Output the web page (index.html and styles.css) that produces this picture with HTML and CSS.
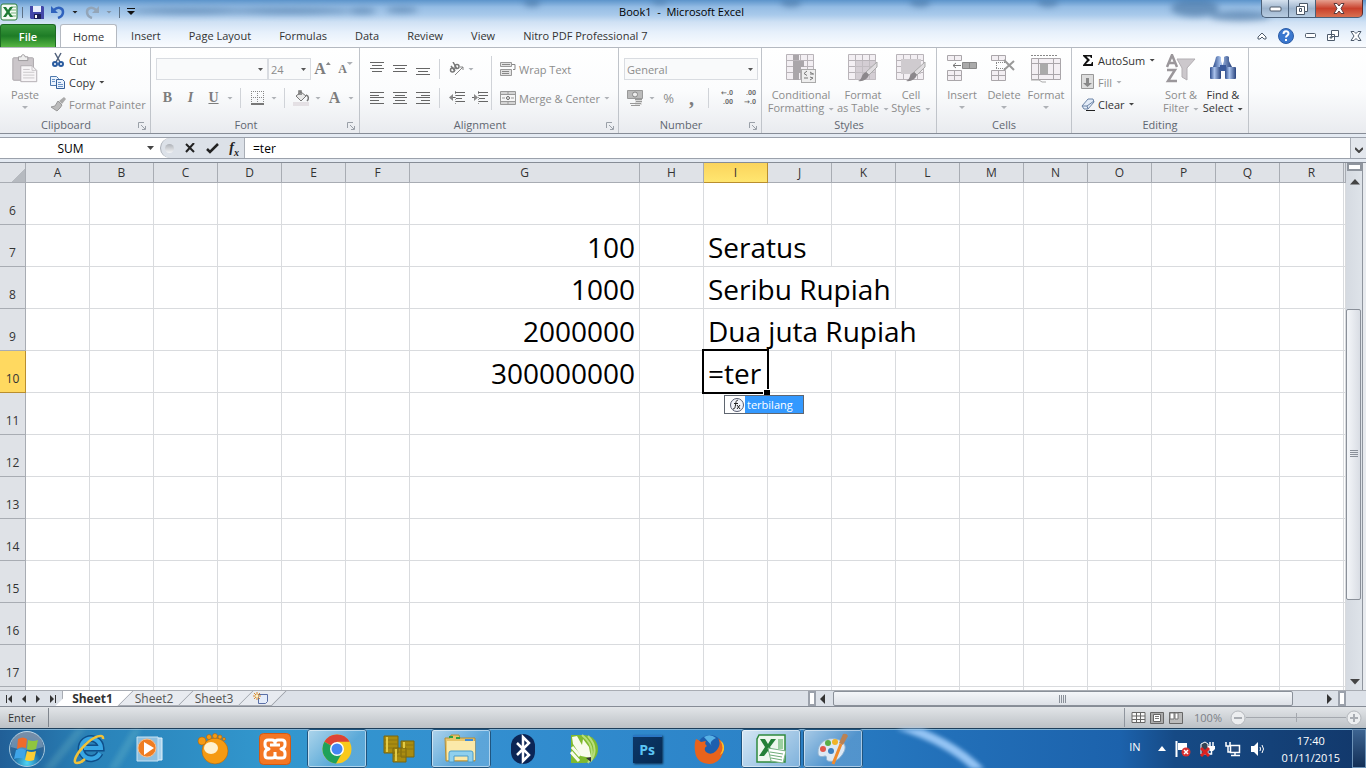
FILE: index.html
```html
<!DOCTYPE html>
<html lang="en">

<head>
  <meta charset="UTF-8">
  <meta name="viewport" content="width=device-width, initial-scale=1.0">
  <title>Book1 - Microsoft Excel</title>
  <link rel="stylesheet" href="styles.css">
</head>

<body>
  <header class="top">
    <svg class="glass" width="100%" height="24" aria-hidden="true">
      <g fill="#3d6a9a" opacity="0.55">
        <ellipse cx="190" cy="11" rx="60" ry="3" />
        <ellipse cx="290" cy="11" rx="62" ry="3" />
        <ellipse cx="362" cy="11" rx="14" ry="3" />
        <ellipse cx="402" cy="10" rx="16" ry="3" />
        <ellipse cx="532" cy="2" rx="8" ry="5" />
        <ellipse cx="660" cy="0" rx="8" ry="5" />
        <ellipse cx="791" cy="2" rx="10" ry="5" />
        <ellipse cx="920" cy="2" rx="10" ry="5" />
        <ellipse cx="1048" cy="2" rx="10" ry="5" />
        <ellipse cx="1195" cy="8" rx="24" ry="9" />
        <ellipse cx="1240" cy="16" rx="30" ry="5" />
      </g>
    </svg>
    <div class="titlebar">
      <div class="quick">
        <svg width="18" height="18" viewBox="0 0 18 18"><rect x="1" y="1" width="16" height="16" rx="2" fill="#f4faf4" stroke="#2c7d3a"/><path d="M11 4h5M11 7h5M11 10h5M11 13h5" stroke="#73b37a"/><path d="M3 4h3l2 3 2-3h3L9.500 9l3.500 5h-3L8 11l-2 3H3l3.500-5z" fill="#1f7a34"/></svg>
        <i class="qsep"></i>
        <button class="qb" aria-label="Save"><svg width="14" height="14" viewBox="0 0 14 14"><path d="M0 1h13l1 1v12H1l-1-1z" fill="#4247a8"/><path d="M3 1h8v6H3z" fill="#e9eefb"/><path d="M4 9h7v5H4z" fill="#1c2055"/><path d="M5 10h2v3H5z" fill="#fff"/></svg></button>
        <button class="qb" aria-label="Undo"><svg width="14" height="14" viewBox="0 0 14 14"><path d="M3 5c4-4 9-2 9 2 0 3-2 5-5 6" fill="none" stroke="#2f62bd" stroke-width="2.500"/><path d="M0 1v7h7z" fill="#2f62bd"/></svg></button>
        <i class="arrow dark"></i>
        <button class="qb" aria-label="Redo"><svg width="14" height="14" viewBox="0 0 14 14"><path d="M11 5C7 1 2 3 2 7c0 3 2 5 5 6" fill="none" stroke="#93a5b8" stroke-width="2.500"/><path d="M14 1v7H7z" fill="#93a5b8"/></svg></button>
        <i class="arrow"></i>
        <i class="qsep"></i>
        <svg width="8" height="8" viewBox="0 0 8 8"><path d="M0 0h8v1H0zM0 3h8L4 7z" fill="#111"/></svg>
      </div>
      <h1>Book1&nbsp; -&nbsp; Microsoft Excel</h1>
      <div class="winbtns">
        <button aria-label="Minimize"><svg width="13" height="6"><rect x="1" y="1" width="11" height="4" rx="1" fill="#fff" stroke="#4a5766"/></svg></button>
        <button aria-label="Restore"><svg width="12" height="12" viewBox="0 0 12 12"><path d="M3.500.5h8v8h-3v3h-8v-8h3z" fill="#fff" stroke="#4a5766"/><path d="M3.500 5.500h2v3h-2zM3.500 3.500h5v5" fill="none" stroke="#4a5766"/></svg></button>
        <button class="close" aria-label="Close"><svg width="12" height="11" viewBox="0 0 12 11"><path d="M1 .5h3l2 2.500 2-2.500h3L8 5.500l3 5H8L6 8l-2 2.500H1l3-5z" fill="#fff" stroke="#5a3a3c"/></svg></button>
      </div>
    </div>
    <nav class="tabs">
      <button class="file">File</button>
      <button class="tab active">Home</button>
      <button class="tab">Insert</button>
      <button class="tab">Page Layout</button>
      <button class="tab">Formulas</button>
      <button class="tab">Data</button>
      <button class="tab">Review</button>
      <button class="tab">View</button>
      <button class="tab">Nitro PDF Professional 7</button>
      <div class="tabs-right">
        <button aria-label="Collapse ribbon"><svg width="10" height="8" viewBox="0 0 10 8"><path d="M1 5l4-4 4 4v2H7L5 5 3 7H1z" fill="#fff" stroke="#4d5a6b"/></svg></button>
        <button aria-label="Help"><svg width="16" height="16" viewBox="0 0 16 16"><circle cx="8" cy="8" r="7.500" fill="#3b78cf" stroke="#2c5ca6"/><path d="M5.500 6c0-3.500 5-3.500 5-.5 0 2-2.500 2-2.500 4M8 11v2" fill="none" stroke="#fff" stroke-width="2"/></svg></button>
        <button aria-label="Minimize workbook"><svg width="11" height="5"><rect x=".5" y=".5" width="10" height="4" rx="1" fill="#fff" stroke="#4d5a6b"/></svg></button>
        <button aria-label="Restore workbook"><svg width="12" height="11" viewBox="0 0 12 11"><path d="M4.500.5h7v6h-7zM.5 4.500h7v6h-7z" fill="#fff" stroke="#4d5a6b"/><path d="M3 7h2v1H3z" fill="#fff" stroke="#4d5a6b"/></svg></button>
        <button aria-label="Close workbook"><svg width="12" height="10" viewBox="0 0 12 10"><path d="M1 .5h3l2 2 2-2h3L8 5l3 4.500H8l-2-2-2 2H1L4 5z" fill="#fff" stroke="#4d5a6b"/></svg></button>
      </div>
    </nav>
  </header>

  <section class="ribbon">
    <div class="group g-clipboard">
      <div class="group-body">
        <button class="big paste" disabled>
          <svg width="28" height="32" viewBox="0 0 28 32"><rect x="1" y="4" width="22" height="24" rx="1" fill="#cbc6ca" stroke="#aaa5aa"/><path d="M7 3h3c0-3 4-3 4 0h3v4H7z" fill="#eee" stroke="#9a969a"/><path d="M9.500 12.500h12l5 5v12h-17z" fill="#f7f5f7" stroke="#b0acb0"/><path d="M21.500 12.500v5h5M12 16.500h7M12 19.500h12M12 22.500h12M12 25.500h12" fill="none" stroke="#c9c5c9"/></svg>
          <span>Paste</span><i class="arrow"></i>
        </button>
        <div class="list">
          <button class="row"><svg width="16" height="16" viewBox="0 0 16 16"><path d="M5 1l5 9M11 1L6 10" stroke="#52627c" stroke-width="1.500"/><circle cx="5" cy="12" r="2" fill="none" stroke="#2b5c9f" stroke-width="2"/><circle cx="11" cy="12" r="2" fill="none" stroke="#2b5c9f" stroke-width="2"/></svg>Cut</button>
          <button class="row"><svg width="16" height="16" viewBox="0 0 16 16"><path d="M.5 2.500h6l2 2v7h-8z" fill="#eaf2fc" stroke="#4e79ae"/><path d="M6.500 5.500h6l2 2v7h-8z" fill="#eaf2fc" stroke="#35609a"/><path d="M2 5.500h3M2 7.500h3M8 8.500h3M8 10.500h5M8 12.500h5" stroke="#6b93c6"/></svg>Copy<i class="arrow dark"></i></button>
          <button class="row" disabled><svg width="16" height="16" viewBox="0 0 16 16"><path d="M14 1l2 2-4 5-3-3z" fill="#aaa"/><path d="M8 5l4 4-2 3-3 3-6-4 4-1z" fill="#bbb" stroke="#999"/></svg>Format Painter</button>
        </div>
      </div>
      <div class="group-label with-launch">Clipboard<svg class="launch" width="8" height="8"><use href="#launch"/></svg></div>
    </div>

    <div class="group g-font">
      <div class="group-body tools">
        <div class="line">
          <div class="combo font-name"><select aria-label="Font" disabled><option></option></select></div>
          <div class="combo font-size"><select aria-label="Font size" disabled><option>24</option></select></div>
          <button class="ib serif grow" disabled>A<i class="up"></i></button>
          <button class="ib serif shrink" disabled>A<i class="arrow"></i></button>
        </div>
        <div class="line">
          <button class="ib serif" disabled>B</button>
          <button class="ib serif italic" disabled>I</button>
          <button class="ib serif under" disabled>U</button><i class="arrow cell"></i>
          <i class="vsep"></i>
          <button class="ib" aria-label="Borders" disabled><svg width="14" height="14" viewBox="0 0 14 14"><path d="M.5 0v13M6.500 0v13M12.500 0v13M0 .5h13M0 6.500h13" stroke="#888" stroke-dasharray="1 1"/><path d="M0 13h13" stroke="#777" stroke-width="2"/></svg></button><i class="arrow cell"></i>
          <i class="vsep"></i>
          <button class="ib" aria-label="Fill color" disabled><svg width="17" height="16" viewBox="0 0 17 16"><path d="M3 6l5-4 5 4-5 5z" fill="#e9e9e9" stroke="#777"/><path d="M6 5V1h2v4M13 5c3 1 3 4 1 6" fill="none" stroke="#777" stroke-width="1.500"/><path d="M0 12h16v4H0z" fill="#e4e0e4"/></svg></button><i class="arrow cell"></i>
          <button class="ib serif fontcolor" disabled>A</button><i class="arrow cell"></i>
        </div>
      </div>
      <div class="group-label with-launch">Font<svg class="launch" width="8" height="8"><use href="#launch"/></svg></div>
    </div>

    <div class="group g-align">
      <div class="group-body">
        <div class="tools align-left">
          <div class="line">
            <button class="ib" aria-label="Top align" disabled><svg width="14" height="14"><path d="M0 .5h14M2 3.500h10M0 6.500h14M2 9.500h10" class="st"/></svg></button>
            <button class="ib" aria-label="Middle align" disabled><svg width="14" height="14"><path d="M0 3.500h14M2 6.500h10M0 9.500h14" class="st"/></svg></button>
            <button class="ib" aria-label="Bottom align" disabled><svg width="14" height="14"><path d="M0 6.500h14M2 9.500h10M0 12.500h14" class="st"/></svg></button>
            <i class="vsep"></i>
            <button class="ib" aria-label="Orientation" disabled><svg width="16" height="14" viewBox="0 0 16 14"><circle cx="3.500" cy="8" r="2" fill="none" stroke="#777" stroke-width="1.500"/><path d="M2 4l4 5M4 0l4 7" stroke="#777" stroke-width="1.500"/><circle cx="8" cy="4.500" r="2" fill="none" stroke="#777" stroke-width="1.500"/><path d="M6 13l8-8M11 5h3v3" fill="none" stroke="#888"/></svg></button><i class="arrow"></i>
          </div>
          <div class="line">
            <button class="ib" aria-label="Align left" disabled><svg width="14" height="12"><path d="M0 .5h14M0 3.500h9M0 5.500h14M0 8.500h9M0 11.500h14" class="st"/></svg></button>
            <button class="ib" aria-label="Center" disabled><svg width="14" height="12"><path d="M0 .5h14M2 3.500h10M0 5.500h14M2 8.500h10M0 11.500h14" class="st"/></svg></button>
            <button class="ib" aria-label="Align right" disabled><svg width="14" height="12"><path d="M0 .5h14M5 3.500h9M0 5.500h14M5 8.500h9M0 11.500h14" class="st"/></svg></button>
            <i class="vsep"></i>
            <button class="ib" aria-label="Decrease indent" disabled><svg width="16" height="14"><path d="M1 6.500h5M6 1.500h10M7 4.500h9M7 7.500h6M6 10.500h10" class="st"/><path d="M4 3v7L0 6.500z" fill="#888"/><path d="M6.500 0v14" stroke="#999" stroke-dasharray="1 1"/></svg></button>
            <button class="ib" aria-label="Increase indent" disabled><svg width="16" height="14"><path d="M0 6.500h5M6 1.500h10M7 4.500h9M7 7.500h6M6 10.500h10" class="st"/><path d="M2 3v7l4-3.500z" fill="#888"/><path d="M6.500 0v14" stroke="#999" stroke-dasharray="1 1"/></svg></button>
          </div>
        </div>
        <div class="tools align-right">
          <div class="line"><button class="row" disabled><svg width="16" height="16" viewBox="0 0 16 16"><path d="M.5 1.500h11v4H.5zM.5 8.500h11v6H.5z" fill="#e2e2e2" stroke="#999"/><path d="M2 3.500h8M2 10.500h7M2 12.500h7M12 3.500h3v5h-2" fill="none" stroke="#888"/></svg>Wrap Text</button></div>
          <div class="line"><button class="row" disabled><svg width="16" height="16" viewBox="0 0 16 16"><path d="M.5 1.500h15v13H.5z" fill="#d4d4d4" stroke="#999"/><path d="M1 5h14v6H1z" fill="#f6f6f6"/><path d="M0 4.500h16M0 11.500h16M8 1v3M8 12v3M2 8h3M11 8h3" stroke="#999"/><circle cx="8" cy="8" r="1.500" fill="none" stroke="#666"/></svg>Merge &amp; Center<i class="arrow"></i></button></div>
        </div>
      </div>
      <div class="group-label with-launch">Alignment<svg class="launch" width="8" height="8"><use href="#launch"/></svg></div>
    </div>

    <div class="group g-number">
      <div class="group-body tools">
        <div class="line">
          <div class="combo number-format"><select aria-label="Number format" disabled><option>General</option></select></div>
        </div>
        <div class="line">
          <button class="ib" aria-label="Accounting format" disabled><svg width="17" height="16" viewBox="0 0 17 16"><path d="M.5.5h15v8H.5z" fill="#bbb" stroke="#999"/><circle cx="8" cy="4.500" r="2.500" fill="#eee" stroke="#888"/><path d="M8 9h7v6H8z" fill="#ddd"/><path d="M8 9.500h7M9 11.500h6M3 13.500h11M4 15.500h9" stroke="#999"/></svg></button><i class="arrow cell"></i>
          <button class="ib pct" disabled>%</button>
          <button class="ib serif comma" disabled>,</button>
          <i class="vsep"></i>
          <button class="ib dec" aria-label="Increase decimal" disabled><span>←.0</span><span>.00</span></button>
          <button class="ib dec" aria-label="Decrease decimal" disabled><span>.00</span><span>→.0</span></button>
        </div>
      </div>
      <div class="group-label with-launch">Number<svg class="launch" width="8" height="8"><use href="#launch"/></svg></div>
    </div>

    <div class="group g-styles">
      <div class="group-body">
        <button class="big cond" disabled>
          <svg width="30" height="30" viewBox="0 0 30 30"><use href="#grid"/><path d="M7 1h6v5H7zM7 7h11v6H7zM7 13h8v6H7zM7 19h6v7H7z" fill="#aaa6aa"/><rect x="15.500" y="15.500" width="14" height="13" fill="#eee" stroke="#aaa"/><path d="M21 17l-3 2.500 3 2M18 24h4M24 18l3 2M24 20h4M24 23l3 1-3 2" fill="none" stroke="#777"/></svg>
          <span>Conditional<br>Formatting<i class="arrow"></i></span>
        </button>
        <button class="big astable" disabled>
          <svg width="30" height="30" viewBox="0 0 30 30"><use href="#grid"/><path d="M7 7h21v19H7z" fill="#c6c1c6" opacity=".7"/><use href="#brush"/></svg>
          <span>Format<br>as Table<i class="arrow"></i></span>
        </button>
        <button class="big cellst" disabled>
          <svg width="30" height="30" viewBox="0 0 30 30"><use href="#grid"/><path d="M5 5h20v15H5z" fill="#cfcbcf"/><use href="#brush"/></svg>
          <span>Cell<br>Styles<i class="arrow"></i></span>
        </button>
      </div>
      <div class="group-label">Styles</div>
    </div>

    <div class="group g-cells">
      <div class="group-body">
        <button class="big" disabled>
          <svg width="30" height="30" viewBox="0 0 30 30"><path d="M.5 1.500h14v5H.5zM7.500 1.500v5M.5 16.500h14v10H.5zM7.500 16.500v10M.5 21.500h14" fill="#f3eff3" stroke="#aaa6aa"/><path d="M15.500 8.500h14v6h-14zM22.500 8.500v6" fill="#aaa" stroke="#888"/><path d="M6 11.500h8M9 9l-3 2.500L9 14" fill="none" stroke="#777"/></svg>
          <span>Insert</span><i class="arrow"></i>
        </button>
        <button class="big" disabled>
          <svg width="30" height="30" viewBox="0 0 30 30"><path d="M2.500 1.500h14v5h-14zM9.500 1.500v5M2.500 16.500h14v10h-14zM9.500 16.500v10M2.500 21.500h14" fill="#f3eff3" stroke="#aaa6aa"/><path d="M7 8.500h10M7.500 9v6M7 14.500h10" stroke="#888" stroke-dasharray="1 1"/><path d="M15 6l10 10M25 7L15 16" stroke="#999" stroke-width="2"/></svg>
          <span>Delete</span><i class="arrow"></i>
        </button>
        <button class="big" disabled>
          <svg width="32" height="30" viewBox="0 0 32 30"><path d="M1.500 4.500h29v21h-29zM1.500 9.500h29M1.500 20.500h29M8.500 4.500v21M23.500 4.500v21" fill="#f3eff3" stroke="#aaa6aa"/><path d="M10 10h8v10h-8z" fill="#aaa"/><path d="M1 1.500h26" stroke="#888" stroke-dasharray="2 1"/><path d="M1 26h8l3 2h4" fill="none" stroke="#aaa"/></svg>
          <span>Format</span><i class="arrow"></i>
        </button>
      </div>
      <div class="group-label">Cells</div>
    </div>

    <div class="group g-editing">
      <div class="group-body">
        <div class="list">
          <button class="row"><svg width="14" height="14" viewBox="0 0 14 14"><path d="M2 2h9v3h-1L9 3.500H5.500L9 7l-4 4h5l1-2h1v4H2v-1l4-5-4-4z" fill="#111"/></svg>AutoSum<i class="arrow dark"></i></button>
          <button class="row" disabled><svg width="14" height="16" viewBox="0 0 14 16"><path d="M.5.5h12v14H.5z" fill="#ddd" stroke="#999"/><path d="M5 4h3v5h3l-4.500 4L2 9h3z" fill="#888"/></svg>Fill<i class="arrow"></i></button>
          <button class="row"><svg width="14" height="14" viewBox="0 0 14 14"><path d="M1 9l6-7h5l1 3-6 7H3z" fill="#e3ecf8" stroke="#6b83a6"/><path d="M1 9h5l7-5M6 9l1 3" fill="none" stroke="#6b83a6"/><path d="M5 13.500h9" stroke="#222"/></svg>Clear<i class="arrow dark"></i></button>
        </div>
        <button class="big" disabled>
          <svg width="32" height="30" viewBox="0 0 32 30"><path d="M2 13L7 1l5 12M4 9h6" fill="none" stroke="#9b979b" stroke-width="2.500"/><path d="M2 16h8L3 27h9" fill="none" stroke="#9b979b" stroke-width="2.500"/><path d="M12 5h18l-8 9v12l-5-3v-9z" fill="#ccc8cc" stroke="#b3afb3"/></svg>
          <span>Sort &amp;<br>Filter<i class="arrow"></i></span>
        </button>
        <button class="big">
          <svg width="30" height="30" viewBox="0 0 30 30"><defs><linearGradient id="bino"><stop offset="0" stop-color="#2c4c8c"/><stop offset=".4" stop-color="#a9c2ec"/><stop offset="1" stop-color="#27427c"/></linearGradient></defs><path d="M8 3q2-2 5 0v4l2 6H5l2-6zM16 3q3-2 5 0v4l3 6H14l2-6z" fill="url(#bino)"/><rect x="2" y="13" width="11" height="12" rx="1" fill="url(#bino)"/><rect x="17" y="13" width="11" height="12" rx="1" fill="url(#bino)"/><path d="M12 11h6v6h-6z" fill="#3a5a9c"/></svg>
          <span>Find &amp;<br>Select<i class="arrow dark"></i></span>
        </button>
      </div>
      <div class="group-label">Editing</div>
    </div>
  </section>

  <div class="formula-bar">
    <div class="namebox"><input type="text" value="SUM" aria-label="Name box"><i class="arrow dark"></i></div>
    <div class="fx-buttons">
      <i class="knob"></i>
      <button aria-label="Cancel"><svg width="10" height="10" viewBox="0 0 10 10"><path d="M1 1l8 8M9 0L1 9" stroke="#222" stroke-width="2"/></svg></button>
      <button aria-label="Enter"><svg width="13" height="11" viewBox="0 0 13 11"><path d="M1 6l3 3 8-8" fill="none" stroke="#222" stroke-width="2.500"/></svg></button>
      <button class="fx" aria-label="Insert function">f<sub>x</sub></button>
    </div>
    <input class="formula" type="text" value="=ter" aria-label="Formula">
    <button class="expand" aria-label="Expand formula bar"><svg width="8" height="6"><path d="M0 1l4 4 4-4" fill="none" stroke="#444" stroke-width="2"/></svg></button>
  </div>

  <main class="workspace">
    <div class="sheet">
      <table>
        <colgroup>
          <col class="c-head"><col span="6" class="c"><col class="c-wide"><col span="11" class="c"><col>
        </colgroup>
        <thead>
          <tr><th class="corner"></th><th>A</th><th>B</th><th>C</th><th>D</th><th>E</th><th>F</th><th>G</th><th>H</th><th class="sel">I</th><th>J</th><th>K</th><th>L</th><th>M</th><th>N</th><th>O</th><th>P</th><th>Q</th><th>R</th><th></th></tr>
        </thead>
        <tbody>
          <tr><th>6</th><td></td><td></td><td></td><td></td><td></td><td></td><td></td><td></td><td></td><td></td><td></td><td></td><td></td><td></td><td></td><td></td><td></td><td></td><td></td></tr>
          <tr><th>7</th><td></td><td></td><td></td><td></td><td></td><td></td><td class="num">100</td><td></td><td colspan="2">Seratus</td><td></td><td></td><td></td><td></td><td></td><td></td><td></td><td></td><td></td></tr>
          <tr><th>8</th><td></td><td></td><td></td><td></td><td></td><td></td><td class="num">1000</td><td></td><td colspan="3">Seribu Rupiah</td><td></td><td></td><td></td><td></td><td></td><td></td><td></td><td></td></tr>
          <tr><th>9</th><td></td><td></td><td></td><td></td><td></td><td></td><td class="num">2000000</td><td></td><td colspan="4">Dua juta Rupiah</td><td></td><td></td><td></td><td></td><td></td><td></td><td></td></tr>
          <tr><th class="sel">10</th><td></td><td></td><td></td><td></td><td></td><td></td><td class="num">300000000</td><td></td><td class="editing">=ter
            <div class="suggest"><svg width="20" height="16" viewBox="0 0 20 16"><circle cx="12" cy="8" r="6.500" fill="#f2f4fa" stroke="#555b70"/><path d="M13 3.500c-2-1-2 2-2.500 4.500S10 12 8 12M9 6.500h4M12 8l3 4M15 8l-3 4" fill="none" stroke="#222"/></svg><span>terbilang</span></div>
          </td><td></td><td></td><td></td><td></td><td></td><td></td><td></td><td></td><td></td><td></td></tr>
          <tr><th>11</th><td></td><td></td><td></td><td></td><td></td><td></td><td></td><td></td><td></td><td></td><td></td><td></td><td></td><td></td><td></td><td></td><td></td><td></td><td></td></tr>
          <tr><th>12</th><td></td><td></td><td></td><td></td><td></td><td></td><td></td><td></td><td></td><td></td><td></td><td></td><td></td><td></td><td></td><td></td><td></td><td></td><td></td></tr>
          <tr><th>13</th><td></td><td></td><td></td><td></td><td></td><td></td><td></td><td></td><td></td><td></td><td></td><td></td><td></td><td></td><td></td><td></td><td></td><td></td><td></td></tr>
          <tr><th>14</th><td></td><td></td><td></td><td></td><td></td><td></td><td></td><td></td><td></td><td></td><td></td><td></td><td></td><td></td><td></td><td></td><td></td><td></td><td></td></tr>
          <tr><th>15</th><td></td><td></td><td></td><td></td><td></td><td></td><td></td><td></td><td></td><td></td><td></td><td></td><td></td><td></td><td></td><td></td><td></td><td></td><td></td></tr>
          <tr><th>16</th><td></td><td></td><td></td><td></td><td></td><td></td><td></td><td></td><td></td><td></td><td></td><td></td><td></td><td></td><td></td><td></td><td></td><td></td><td></td></tr>
          <tr><th>17</th><td></td><td></td><td></td><td></td><td></td><td></td><td></td><td></td><td></td><td></td><td></td><td></td><td></td><td></td><td></td><td></td><td></td><td></td><td></td></tr>
          <tr><th></th><td></td><td></td><td></td><td></td><td></td><td></td><td></td><td></td><td></td><td></td><td></td><td></td><td></td><td></td><td></td><td></td><td></td><td></td><td></td></tr>
        </tbody>
      </table>
    </div>
    <div class="vscroll">
      <i class="split"></i>
      <svg width="10" height="6"><path d="M0 5.500h10L5 0z" fill="#444"/></svg>
      <div class="vtrack">
        <i class="before"></i>
        <div class="vthumb"><svg width="8" height="8"><path d="M0 .5h8M0 2.500h8M0 4.500h8M0 6.500h8" stroke="#8a9099"/></svg></div>
        <i class="after"></i>
      </div>
      <svg width="10" height="6"><path d="M0 0h10L5 5.500z" fill="#444"/></svg>
    </div>
  </main>

  <div class="sheetbar">
    <div class="nav">
      <button aria-label="First sheet"><svg width="8" height="8"><path d="M1.500 0v8" stroke="#333"/><path d="M7 0v8L3 4z" fill="#333"/></svg></button>
      <button aria-label="Previous sheet"><svg width="6" height="8"><path d="M5 0v8L1 4z" fill="#333"/></svg></button>
      <button aria-label="Next sheet"><svg width="6" height="8"><path d="M1 0v8l4-4z" fill="#333"/></svg></button>
      <button aria-label="Last sheet"><svg width="8" height="8"><path d="M6.500 0v8" stroke="#333"/><path d="M1 0v8l4-4z" fill="#333"/></svg></button>
    </div>
    <div class="sheets">
      <button class="sheet-tab current">Sheet1</button>
      <button class="sheet-tab">Sheet2</button>
      <button class="sheet-tab">Sheet3</button>
      <button class="sheet-tab new" aria-label="Insert worksheet"><svg width="16" height="13" viewBox="0 0 16 13"><path d="M5.500 2.500h9v7l-2 2h-7z" fill="#e4ecfa" stroke="#5a6fa6"/><path d="M4 0v8M0 4h8M1 1l6 6M7 1L1 7" stroke="#d98a2b"/><circle cx="4" cy="4" r="1.500" fill="#fff3c0"/></svg></button>
    </div>
    <div class="hscroll">
      <i class="split"></i>
      <svg width="17" height="10"><path d="M9 0v10L4 5z" fill="#333"/></svg>
      <div class="hthumb"><svg width="8" height="8"><path d="M.5 0v8M2.500 0v8M4.500 0v8M6.500 0v8" stroke="#8a9099"/></svg></div>
      <svg class="right" width="17" height="10"><path d="M6 0v10l5-5z" fill="#333"/></svg>
      <i class="split"></i>
    </div>
  </div>

  <footer class="status">
    <span class="mode">Enter</span>
    <div class="view">
      <button aria-label="Normal"><svg width="15" height="12"><path d="M1 .5h13v10H1zM1 4h13M1 7.500h13M5.500 1v9M9.500 1v9" fill="#f8f8f8" stroke="#666"/></svg></button>
      <button aria-label="Page layout"><svg width="15" height="12"><path d="M.5.5h13v11H.5z" fill="#aaa" stroke="#666"/><path d="M3.500 2.500h7v7h-7z" fill="#fff" stroke="#666"/><path d="M5 4.500h4M5 6.500h4" stroke="#777"/></svg></button>
      <button aria-label="Page break preview"><svg width="15" height="12"><path d="M.5.5h13v11H.5z" fill="#bbb" stroke="#666"/><path d="M1 1h4v6H1zM6 1h3v6H6z" fill="#fff" stroke="#777"/></svg></button>
      <span class="zoom">100%</span>
      <button aria-label="Zoom out"><svg width="16" height="16"><circle cx="8" cy="8" r="7" fill="#eceef0" stroke="#b4b8bd"/><path d="M4 8h8" stroke="#a9adb3" stroke-width="2"/></svg></button>
      <div class="slider"><i></i></div>
      <button aria-label="Zoom in"><svg width="16" height="16"><circle cx="8" cy="8" r="7" fill="#eceef0" stroke="#b4b8bd"/><path d="M4 8h8M8 4v8" stroke="#a9adb3" stroke-width="2"/></svg></button>
    </div>
  </footer>

  <div class="taskbar">
    <svg class="streaks" width="100%" height="40" aria-hidden="true">
      <path d="M40 50L85-5M110 45l30-50" stroke="#b7efd4" stroke-width="8" opacity=".15"/>
      <path d="M898-4C930 6 960 20 984 46" fill="none" stroke="#a9d3ff" stroke-width="9" opacity=".85"/>
    </svg>
    <button class="start" aria-label="Start"><svg width="38" height="38" viewBox="0 0 38 38"><defs><radialGradient id="orb" cx=".5" cy=".9" r=".8"><stop offset="0" stop-color="#4fd6f5"/><stop offset=".5" stop-color="#1a66a0"/><stop offset="1" stop-color="#48688c"/></radialGradient></defs><circle cx="19" cy="19" r="17.500" fill="url(#orb)" stroke="#a5c8de"/><path d="M3 17a16 16 0 0 1 32 0q-16 6-32 0z" fill="#fff" opacity=".25"/><path d="M10 9q5-3 9 0l-1 9q-5-2-9 1z" fill="#ee6b2b"/><path d="M20 10q5 2 10 0l-2 9q-5 2-9 0z" fill="#8fc63f"/><path d="M8 20q5-3 10 0l-2 9q-5-2-10 0z" fill="#3fa5e8"/><path d="M19 21q4 2 9 0l-2 9q-5 2-9 0z" fill="#fbcd35"/></svg></button>
    <button class="app" aria-label="Internet Explorer"><svg width="34" height="32" viewBox="0 0 34 32"><path d="M28 20a10 10 0 1 1 1-5H12" fill="none" stroke="#0f4f8a" stroke-width="7"/><path d="M28 20a10 10 0 1 1 1-5H12" fill="none" stroke="#38a6e4" stroke-width="4"/><path d="M31 6c1-6-9-3-18 6S0 30 5 30c3 0 6-2 8-4" fill="none" stroke="#f0c23a" stroke-width="2.500"/></svg></button>
    <button class="app" aria-label="Media Player"><svg width="30" height="26" viewBox="0 0 30 26"><path d="M18 2h8v22h-8z" fill="#a9d2ec" stroke="#e5f3fb"/><path d="M1 1h21v24H1z" fill="#8dc0e0" stroke="#c9e3f3"/><circle cx="11" cy="12" r="9" fill="#ef7d22" stroke="#f9bd8b"/><path d="M8 6l10 6-10 7z" fill="#fff"/></svg></button>
    <button class="app" aria-label="GOM Player"><svg width="34" height="32" viewBox="0 0 34 32"><g fill="#f59a12" stroke="#a65a06" stroke-width=".5"><circle cx="19" cy="18" r="13"/><circle cx="6" cy="8" r="4"/><circle cx="13" cy="4" r="2.500"/><circle cx="19" cy="3" r="2.500"/><circle cx="24" cy="4" r="2"/><circle cx="28" cy="6" r="1.500"/></g><ellipse cx="15" cy="15" rx="7" ry="6" fill="#fff1cf"/></svg></button>
    <button class="app" aria-label="XAMPP"><svg width="32" height="32" viewBox="0 0 32 32"><rect x=".5" y=".5" width="31" height="31" rx="4" fill="#f37623" stroke="#d45a12"/><path d="M16 13V10q0-3-3-3H9q-3 0-3 3v2q0 3 4 4-4 1-4 4v2q0 3 3 3h4q3 0 3-3v-3M16 13V10q0-3 3-3h4q3 0 3 3v2q0 3-4 4 4 1 4 4v2q0 3-3 3h-4q-3 0-3-3M11 12v0h10M11 20h0M21 20h0" fill="none" stroke="#fff" stroke-width="3" stroke-linejoin="round"/></svg></button>
    <button class="app open" aria-label="Chrome"><svg width="30" height="30" viewBox="0 0 30 30"><circle cx="15" cy="15" r="14.500" fill="#f9c91d"/><path d="M15 15L2.400 7.800A14.500 14.500 0 0 1 27.600 7.800H15z" fill="#dd4336"/><path d="M15 15L2.400 7.800A14.500 14.500 0 0 0 14 29.500L20 19z" fill="#1fa15a"/><circle cx="15" cy="15" r="7" fill="#fff"/><circle cx="15" cy="15" r="5.500" fill="#4486f4"/></svg></button>
    <button class="app" aria-label="Database"><svg width="32" height="28" viewBox="0 0 32 28"><g fill="#a98c10" stroke="#7b670c"><path d="M1 1h14v17H1zM18 6h13v16H18zM10 13h13v14H10z"/></g><path d="M1 5h14M1 9h14M1 13h9M23 10h8M23 14h8M10 17h13M10 21h13" stroke="#8d7610"/><path d="M4 2v15M21 7v6M13 14v12" stroke="#e3cb46" stroke-width="2"/></svg></button>
    <button class="app open" aria-label="Explorer"><svg width="34" height="30" viewBox="0 0 34 30"><path d="M1 4h5l1-3h8l1 3h15v23H2z" fill="#eac66a" stroke="#b28e3b"/><path d="M3 7h28v19H3z" fill="#fbe9a9"/><path d="M5 2h4v2H5zM12 3h4v2h-4z" fill="#2da044"/><path d="M21 5h8v2h-8z" fill="#3d8ad8"/><path d="M5 28v-9q0-2 2-2h20q2 0 2 2v9h-5v-6H10v6z" fill="#8fd0ee" stroke="#4b9ccb"/></svg></button>
    <button class="app" aria-label="Bluetooth"><svg width="24" height="30" viewBox="0 0 24 30"><rect width="24" height="30" rx="12" fill="#0b2556"/><path d="M6 9l12 12-6 6V3l6 6L6 21" fill="none" stroke="#fff" stroke-width="2.500"/></svg></button>
    <button class="app" aria-label="CorelDRAW"><svg width="30" height="30" viewBox="0 0 30 30"><path d="M1 1h12c9 0 15 6 15 14s-6 14-14 14H1z" fill="#7fba2f"/><path d="M18 2q12 13 2 26M12 1q16 13 6 28" stroke="#b9de7d" stroke-width="2" fill="none"/><path d="M2 3l5-1 5 9 1-6 6 8 2 11-10-2-8-12z" fill="#f8fbec"/><path d="M2 13l8 9M1 18l8 9" stroke="#f8fbec" stroke-width="3"/><path d="M16 24l5-1v5z" fill="#333"/></svg></button>
    <button class="app" aria-label="Photoshop"><span class="ps">Ps</span></button>
    <button class="app" aria-label="Firefox"><svg width="30" height="30" viewBox="0 0 30 30"><circle cx="16" cy="14" r="13" fill="#1e5fae"/><path d="M10 3q6-4 12 1-8 4-4 8" fill="#57b2e6"/><path d="M2 5q3 1 5 3l5-1q-2 3 1 5-4 2-1 6 5 4 10-1 6-7 2-13 8 7 5 15-4 11-14 11Q2 29 1 17 0 10 2 5z" fill="#e9631c"/><path d="M26 6q5 8 0 15 5-3 4-9-1-4-4-6z" fill="#fbc02a"/></svg></button>
    <button class="app open bright" aria-label="Excel"><svg width="30" height="30" viewBox="0 0 30 30"><path d="M3 1h26v27H1V5z" fill="#eef7ee" stroke="#2f8a3e" stroke-width="1.500"/><path d="M22 5h5v10h-5z" fill="#9bd0a0"/><path d="M4 5h5l3 5 3-5h5l-6 8 6 9h-5l-3-5-4 5H3l6-9z" fill="#258038"/><path d="M12 14l18 3-3 12-12-2z" fill="#fff" stroke="#7ab384"/><path d="M14 18l13 2M14 21l12 2M15 24l11 2" stroke="#6eab78"/></svg></button>
    <button class="app open" aria-label="Paint"><svg width="34" height="32" viewBox="0 0 34 32"><path d="M2 20C1 9 12 4 20 6c9 2 12 8 6 16-4 6-10 7-14 6-3-1 0-5-3-5-3 1-7 1-7-3z" fill="#dce9f5" stroke="#8fb2d0"/><circle cx="7" cy="16" r="3" fill="#e2574c"/><circle cx="12" cy="10" r="3" fill="#5aad46"/><circle cx="19" cy="9" r="3" fill="#f0b428"/><circle cx="15" cy="18" r="3" fill="#3c7fc0"/><path d="M17 31l8-20" stroke="#f08a2c" stroke-width="3"/><path d="M23 10l4-9q4-1 5 2l-5 9z" fill="#b98255"/></svg></button>
    <div class="tray">
      <span class="lang">IN</span>
      <svg width="8" height="5"><path d="M0 5h8L4 0z" fill="#fff"/></svg>
      <svg width="16" height="16" viewBox="0 0 16 16"><path d="M1.500 0v16" stroke="#fff" stroke-width="2"/><path d="M3 2h9v7H3z" fill="#fff"/><circle cx="11" cy="11" r="4.500" fill="#d93030"/><path d="M9 9l4 4M13 9l-4 4" stroke="#fff" stroke-width="1.500"/></svg>
      <svg width="16" height="16" viewBox="0 0 16 16"><path d="M1 6V3l4-2 3 2v10H1z" fill="#345" stroke="#fff"/><path d="M8 5h7v3l-2 2h-3L8 8z" fill="#fff"/><path d="M10 1v4M13 1v4M11.500 10v3H8" fill="none" stroke="#fff" stroke-width="1.500"/><path d="M1 7l8 8M9 7l-8 8" stroke="#dd2222" stroke-width="3"/></svg>
      <svg width="16" height="16" viewBox="0 0 16 16"><path d="M5.500 4.500h9v7h-9z" fill="#24497a" stroke="#fff" stroke-width="1.500"/><path d="M10 12v2M6 14.500h9M1 1v4h4V1M3 5v6h3" fill="none" stroke="#fff" stroke-width="1.500"/></svg>
      <svg width="16" height="16" viewBox="0 0 16 16"><path d="M1 5h3l4-4v14l-4-4H1z" fill="#fff"/><path d="M10 6q1 2 0 4M12 4q3 4 0 8" fill="none" stroke="#fff"/></svg>
      <div class="clock">17:40<br>01/11/2015</div>
      <button class="desktop" aria-label="Show desktop"></button>
    </div>
  </div>

  <svg width="0" height="0" class="defs" aria-hidden="true">
    <symbol id="launch" viewBox="0 0 8 8"><path d="M.5 6V.5H6M3 3l4 4M7.500 4v3.500H4" fill="none" stroke="#9aa0a8"/></symbol>
    <symbol id="grid" viewBox="0 0 30 30"><path d="M.5.5h27v25H.5zM.5 6.500h27M.5 12.500h27M.5 18.500h27M7.500.5v25M14.500.5v25M21.500.5v25" fill="#f3eff3" stroke="#b9b4b9"/></symbol>
    <symbol id="brush" viewBox="0 0 30 30"><path d="M29 8v5l-8 8-3-3z" fill="#e0dde0" stroke="#aaa"/><path d="M18 18l3 3q-3 7-11 6 3-1 4-5 1-3 4-4z" fill="#8b878b"/></symbol>
  </svg>
</body>

</html>
```
FILE: styles.css
```css
* {
  box-sizing: border-box;
}

body {
  margin: 0;
  height: 100vh;
  display: flex;
  flex-direction: column;
  overflow: hidden;
  background: #e4eaf2;
  color: #333;
  font-family: "Open Sans", "Noto Sans", sans-serif;
  font-size: 11px;
  line-height: 13px;
}

button,
input,
select {
  font: inherit;
  color: inherit;
  border: none;
  background: none;
  padding: 0;
  margin: 0;
}

button:disabled {
  color: #8c8c8c;
}

svg {
  flex: none;
}

.defs {
  position: absolute;
}

.arrow {
  flex: none;
  width: 6px;
  height: 3px;
  background: #aeb1b6;
  clip-path: polygon(0 0, 100% 0, 50% 100%);
}

.arrow.dark {
  background: #444;
}

.arrow.cell {
  width: 6px;
  margin: 0 2px;
}

/* title bar and tabs */
.top {
  position: relative;
  height: 48px;
  background: linear-gradient(#5c94cb 0, #94bce4 7px, #a9caeb 15px, #cfe1f4 22px, #e6f0fb 32px, #fafcff 47px);
  border-bottom: 1px solid #b4b9c1;
}

.glass {
  position: absolute;
  left: 0;
  top: 0;
  filter: blur(3px);
}

.titlebar {
  position: relative;
  height: 24px;
  display: flex;
  justify-content: space-between;
}

.quick {
  flex: 1;
  display: flex;
  align-items: center;
  gap: 7px;
}

.qsep {
  width: 1px;
  height: 11px;
  background: #5d7186;
  margin-left: -3px;
}

.quick .arrow + .qsep {
  margin-left: 0;
}

.quick .arrow {
  width: 6px;
  background: #8595a6;
}

.quick .arrow.dark {
  background: #222;
}

.qb {
  display: flex;
}

.titlebar h1 {
  margin: 0;
  font-size: 11px;
  font-weight: normal;
  line-height: 23px;
  color: #000;
}

.winbtns {
  flex: 1;
  display: flex;
  justify-content: flex-end;
  padding-right: 3px;
}

.winbtns button {
  width: 27px;
  height: 18px;
  display: flex;
  align-items: center;
  justify-content: center;
  border: 1px solid #4b6078;
  border-top: none;
  border-right: none;
  background: linear-gradient(#d5e1ee, #9db4cd 50%, #b7cce1);
}

.winbtns button:first-child {
  border-radius: 0 0 0 5px;
}

.winbtns .close {
  width: 48px;
  border-right: 1px solid #5d2a2a;
  border-radius: 0 0 5px 0;
  background: linear-gradient(#e6a08f, #c9412c 50%, #d97050);
}

.tabs {
  position: relative;
  display: flex;
  height: 23px;
}

.file {
  width: 56px;
  color: #fff;
  font-weight: 600;
  border: 1px solid #1c6b23;
  border-bottom: none;
  border-radius: 3px 3px 0 0;
  background: linear-gradient(#3c9a3f, #1e7c26 50%, #56b543);
}

.tab {
  padding: 0 14px;
}

.tab.active {
  margin-left: 4px;
  padding: 0 12px;
  background: #fff;
  border: 1px solid #b4b9c1;
  border-bottom: none;
  border-radius: 3px 3px 0 0;
}

.tabs-right {
  margin-left: auto;
  display: flex;
  align-items: center;
  gap: 11px;
  padding-right: 4px;
}

.tabs-right button {
  display: flex;
}

/* ribbon */
.ribbon {
  display: flex;
  height: 86px;
  margin-bottom: 3px;
  background: linear-gradient(#fff, #fbfcfd 50%, #e9ebef);
  border-bottom: 1px solid #868c96;
}

.group {
  display: flex;
  flex-direction: column;
  border-right: 1px solid #c0c4ca;
}

.g-clipboard {
  width: 151px;
}

.g-font {
  width: 209px;
}

.g-align {
  width: 259px;
}

.g-number {
  width: 143px;
}

.g-styles {
  width: 175px;
}

.g-cells {
  width: 135px;
}

.g-editing {
  width: 177px;
}

.group-body {
  display: flex;
  height: 70px;
}

.group-label {
  position: relative;
  text-align: center;
  color: #5f6670;
}

.with-launch {
  padding-right: 18px;
}

.launch {
  position: absolute;
  right: 4px;
  bottom: 1px;
}

.big {
  width: 42px;
  display: flex;
  flex-direction: column;
  align-items: center;
  padding-top: 6px;
}

.big svg {
  height: 30px;
  margin-bottom: 4px;
}

.big span {
  white-space: nowrap;
}

.big > .arrow {
  margin-top: 5px;
}

.big span .arrow,
.row .arrow {
  display: inline-block;
  margin-left: 4px;
  vertical-align: middle;
}

.paste {
  width: 50px;
}

.cond {
  width: 72px;
}

.astable {
  width: 52px;
}

.cellst {
  width: 44px;
}

.g-styles .group-body {
  padding-left: 3px;
}

.g-cells .group-body {
  padding-left: 4px;
}

.list {
  padding-top: 1px;
}

.row {
  display: flex;
  align-items: center;
  gap: 3px;
  height: 22px;
  white-space: nowrap;
}

.row .arrow {
  margin-left: 1px;
}

.g-editing .list {
  width: 88px;
  padding-left: 9px;
}

.tools {
  flex-direction: column;
  gap: 7px;
  padding: 10px 0 0 5px;
  display: flex;
}

.line {
  display: flex;
  align-items: center;
  height: 22px;
}

.ib {
  width: 23px;
  height: 22px;
  display: flex;
  align-items: center;
  justify-content: center;
}

.st {
  stroke: #666;
}

.ib.serif {
  font: bold 14px "Liberation Serif", serif;
  color: #7d7d7d;
}

.ib.italic {
  font-style: italic;
}

.ib.under {
  text-decoration: underline;
}

.ib.grow {
  font-size: 16px;
}

.ib.shrink {
  font-size: 12px;
}

.ib.fontcolor {
  font-size: 16px;
}

.ib.comma {
  font-size: 20px;
}

.grow .up,
.shrink .arrow {
  align-self: flex-start;
  margin-top: 4px;
}

.up {
  width: 5px;
  height: 3px;
  background: #888;
  clip-path: polygon(50% 0, 100% 100%, 0 100%);
}

.ib.pct {
  font-size: 13px;
}

.ib.dec {
  flex-direction: column;
  align-items: flex-end;
  padding-right: 4px;
  font: bold 7px/9px Roboto, "DejaVu Sans", sans-serif;
  color: #6d6d6d;
}

.vsep {
  width: 1px;
  height: 20px;
  margin: 0 5px;
  background: #d0d3d8;
}

.combo {
  position: relative;
  height: 22px;
  border: 1px solid #d9dce1;
  background: #f9fafb;
}

.combo::after {
  content: "";
  position: absolute;
  right: 4px;
  top: 9px;
  width: 5px;
  height: 3px;
  background: #555;
  clip-path: polygon(0 0, 100% 0, 50% 100%);
}

.combo select {
  width: 100%;
  height: 20px;
  padding: 0 2px;
  appearance: none;
  color: #8c8c8c;
  opacity: 1;
}

.font-name {
  width: 112px;
}

.font-size {
  width: 43px;
}

.number-format {
  width: 134px;
}

.align-left {
  width: 132px;
  position: relative;
}

.align-left::after {
  content: "";
  position: absolute;
  right: 0;
  top: 8px;
  width: 1px;
  height: 54px;
  background: #d0d3d8;
}

.align-right {
  padding-left: 8px;
}

/* formula bar */
.formula-bar {
  display: flex;
  height: 22px;
  margin-bottom: 3px;
  background: #fff;
  border: 1px solid #9ba1ab;
  border-left: none;
  border-right: none;
}

.namebox {
  width: 160px;
  display: flex;
  align-items: center;
  padding-right: 6px;
}

.namebox input {
  flex: 1;
  min-width: 0;
  padding-right: 6px;
  text-align: center;
  font-size: 12px;
  color: #000;
}

.namebox .arrow {
  width: 7px;
  height: 4px;
}

.fx-buttons {
  width: 85px;
  display: flex;
  align-items: center;
  justify-content: space-between;
  padding: 0 5px 0 4px;
  background: #dce1e8;
  border: 1px solid #a9aeb6;
  border-top: none;
  border-bottom: none;
  border-radius: 10px 0 0 10px;
}

.fx-buttons button {
  display: flex;
}

.knob {
  width: 9px;
  height: 9px;
  border-radius: 50%;
  background: linear-gradient(#aeb2b8, #f4f5f7);
}

.fx-buttons .fx {
  display: block;
  font: italic bold 14px/16px "Liberation Serif", serif;
  color: #222;
}

.fx sub {
  font-size: 10px;
  line-height: 0;
}

.formula {
  flex: 1;
  padding-left: 8px;
  font-size: 12px;
  color: #000;
}

.expand {
  width: 16px;
  background: #e3e7ed;
  border-left: 1px solid #a9aeb6;
}

/* worksheet */
.workspace {
  flex: 1;
  min-height: 0;
  display: flex;
  border-top: 1px solid #868c96;
}

.sheet {
  flex: 1;
  min-width: 0;
  overflow: hidden;
  background: #fff;
}

table {
  width: 100%;
  table-layout: fixed;
  border-collapse: separate;
  border-spacing: 0;
}

.c-head {
  width: 26px;
}

.c {
  width: 64px;
}

.c-wide {
  width: 230px;
}

th,
td {
  padding: 0;
  border-right: 1px solid #d9dbde;
  border-bottom: 1px solid #d9dbde;
}

th {
  background: #dfe2e7;
  border-color: #a8acb3;
  font-family: "Open Sans", sans-serif;
  font-size: 12px;
  font-weight: normal;
  line-height: 16px;
}

thead th {
  height: 20px;
}

tbody th {
  height: 42px;
  padding-bottom: 5px;
  vertical-align: bottom;
}

.corner {
  background: linear-gradient(135deg, #dfe2e7 70%, #b6bac0 70%);
}

thead .sel {
  background: linear-gradient(#fbd45c, #ffe670);
  border-color: #b98e2e;
}

tbody .sel {
  background: #ffd960;
  border-color: #b98e2e;
}

td {
  padding: 0 4px 2px;
  vertical-align: bottom;
  white-space: nowrap;
  font-family: "Open Sans", sans-serif;
  font-size: 28px;
  line-height: 34px;
  color: #000;
}

.num {
  text-align: right;
}

.editing {
  position: relative;
}

.editing::before {
  content: "";
  position: absolute;
  inset: -2px;
  border: 2px solid #000;
}

.editing::after {
  content: "";
  position: absolute;
  right: -3px;
  bottom: -3px;
  width: 6px;
  height: 5px;
  background: #000;
  border: 1px solid #fff;
  border-right: none;
  border-bottom: none;
}

.suggest {
  position: absolute;
  left: 20px;
  top: 44px;
  z-index: 1;
  width: 80px;
  height: 19px;
  display: flex;
  align-items: center;
  background: #fff;
  border: 1px solid #5f6670;
  font-size: 11px;
  line-height: 17px;
}

.suggest span {
  flex: 1;
  padding-left: 2px;
  background: #3399ff;
  color: #fff;
}

.vscroll {
  width: 20px;
  display: flex;
  flex-direction: column;
  align-items: center;
  gap: 8px;
  padding: 0 3px 5px 0;
  background: linear-gradient(90deg, #d5dae1, #dee3e9 16px, #8f959e 16px, #8f959e 17px, #e8ebef 17px);
}

.vscroll .split {
  width: 15px;
  height: 8px;
  border: 2px solid #8f959e;
  background: #fff;
}

.vtrack {
  flex: 1;
  width: 100%;
  padding-right: 2px;
  display: flex;
  flex-direction: column;
}

.before {
  flex: 117;
}

.after {
  flex: 72;
}

.vthumb {
  flex: 291;
  display: flex;
  align-items: center;
  justify-content: center;
  border: 1px solid #8a9099;
  border-radius: 2px;
  background: linear-gradient(90deg, #f4f6f9, #d9dde4);
}

/* sheet tabs */
.sheetbar {
  display: flex;
  height: 17px;
  padding-right: 20px;
  background: #dce1e8;
  border-top: 1px solid #a8acb3;
  border-bottom: 1px solid #868c96;
}

.nav {
  width: 63px;
  display: flex;
  align-items: center;
  justify-content: space-between;
  padding: 0 5px;
  border-right: 1px solid #a8acb3;
}

.nav button {
  display: flex;
}

.sheets {
  flex: 1;
  display: flex;
  position: relative;
  z-index: 0;
}

.sheet-tab {
  position: relative;
  width: 60px;
  padding-right: 4px;
  font-size: 12px;
  line-height: 15px;
  color: #555;
}

.sheet-tab::before {
  content: "";
  position: absolute;
  inset: 0;
  z-index: -1;
  transform: skewX(-45deg);
  background: #e8ebf0;
  border-right: 1px solid #8f959e;
  border-bottom: 1px solid #a8acb3;
}

.current {
  width: 63px;
  font-weight: bold;
  color: #333;
  background: linear-gradient(90deg, #fff 50%, transparent 50%);
}

.current::before {
  background: #fff;
  border-bottom: none;
}

.sheet-tab.new {
  display: flex;
  align-items: center;
  justify-content: center;
  width: 33px;
}

.hscroll {
  width: 538px;
  display: flex;
  align-items: center;
}

.hscroll .split {
  width: 8px;
  height: 15px;
  background: #fff;
  border: 2px solid #9ba1ab;
}

.hthumb {
  flex: 1;
  height: 15px;
  display: flex;
  align-items: center;
  justify-content: center;
  border: 1px solid #8a9099;
  border-radius: 2px;
  background: linear-gradient(#f4f6f9, #dde1e7);
}

.hscroll .right {
  margin-left: 28px;
}

/* status bar */
.status {
  height: 21px;
  display: flex;
  align-items: center;
  justify-content: space-between;
  background: linear-gradient(#e2e5e8, #bcc1c6);
}

.mode {
  width: 49px;
  padding-left: 8px;
  line-height: 19px;
  border-right: 1px solid #7f858d;
}

.view {
  display: flex;
  align-items: center;
  gap: 4px;
  padding: 0 4px 0 6px;
  border-left: 1px solid #8f959e;
}

.view button {
  display: flex;
}

.zoom {
  padding: 0 4px 0 6px;
  font-size: 11px;
  line-height: 19px;
  color: #7d8187;
}

.slider {
  width: 100px;
  height: 9px;
  margin: 0 -4px;
  display: flex;
  justify-content: center;
  background: linear-gradient(#a4a8ae, #a4a8ae) center / 100% 1px no-repeat;
}

.slider i {
  width: 1px;
  background: #a4a8ae;
}

/* taskbar */
.taskbar {
  position: relative;
  height: 40px;
  display: flex;
  align-items: center;
  gap: 2px;
  border-top: 1px solid #1d3f5c;
  background: linear-gradient(90deg, #215f97, #2a83b9 7%, #3297ce 20%, #338fd0 35%, #2c83c8 55%, #226fb8 70%, #1c62ac 82%, #164a85 86%, #12386b);
  box-shadow: inset 0 1px #7fb2d6;
}

.streaks {
  position: absolute;
  left: 0;
  top: 0;
  filter: blur(2px);
}

.start {
  position: relative;
  width: 57px;
  padding-left: 8px;
  display: flex;
}

.app {
  position: relative;
  width: 60px;
  height: 39px;
  display: flex;
  align-items: center;
  justify-content: center;
}

.app.open {
  border: 1px solid #d3e8f7;
  border-radius: 3px;
  outline: 1px solid #1f5580;
  outline-offset: -1px;
  background: linear-gradient(135deg, rgba(255, 255, 255, 0.6), rgba(255, 255, 255, 0.2) 60%);
  box-shadow: inset 0 0 0 1px rgba(255, 255, 255, 0.5);
}

.app.bright {
  background: linear-gradient(135deg, rgba(255, 255, 255, 0.8), rgba(255, 255, 255, 0.4));
}

.ps {
  width: 29px;
  height: 28px;
  font-size: 14px;
  font-weight: bold;
  line-height: 26px;
  color: #5bc5f5;
  background: linear-gradient(135deg, #0c3768, #062a52);
  border-top: 2px solid #2a76c4;
  box-shadow: 1px 1px 2px #0b2b4c;
}

.tray {
  position: relative;
  margin-left: auto;
  align-self: stretch;
  display: flex;
  align-items: center;
  gap: 8px;
  color: #fff;
}

.tray .lang {
  padding: 0 9px 4px 0;
}

.tray > svg + svg {
  margin-left: 1px;
}

.clock {
  padding: 0 4px 0 8px;
  text-align: center;
  line-height: 17px;
}

.desktop {
  align-self: stretch;
  width: 14px;
  border: 1px solid #6d93b8;
  background: linear-gradient(#3d6491, #122f57);
}
```
